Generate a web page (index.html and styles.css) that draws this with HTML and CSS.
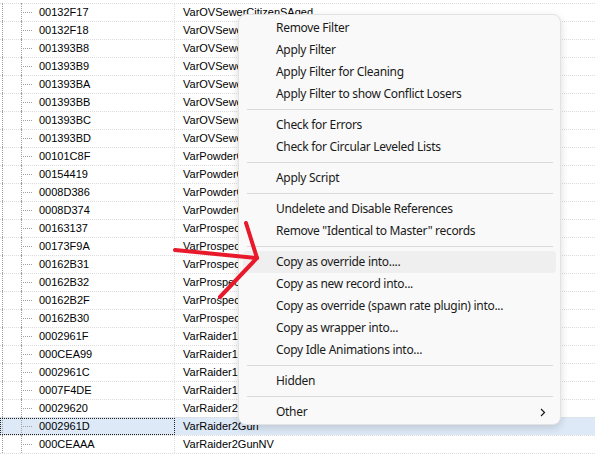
FILE: index.html
```html
<!DOCTYPE html>
<html>
<head>
<meta charset="utf-8">
<link rel="stylesheet" href="styles.css">
</head>
<body>
<div class="tree">
  <div class="row"><div class="c1"><span class="root"></span><span class="branch"></span><span class="id">00132F17</span></div><div class="c2">VarOVSewerCitizenSAged</div></div>
  <div class="row"><div class="c1"><span class="root"></span><span class="branch"></span><span class="id">00132F18</span></div><div class="c2">VarOVSewerCitizenSBase</div></div>
  <div class="row"><div class="c1"><span class="root"></span><span class="branch"></span><span class="id">001393B8</span></div><div class="c2">VarOVSewerCitizenF01</div></div>
  <div class="row"><div class="c1"><span class="root"></span><span class="branch"></span><span class="id">001393B9</span></div><div class="c2">VarOVSewerCitizenF02</div></div>
  <div class="row"><div class="c1"><span class="root"></span><span class="branch"></span><span class="id">001393BA</span></div><div class="c2">VarOVSewerCitizenM01</div></div>
  <div class="row"><div class="c1"><span class="root"></span><span class="branch"></span><span class="id">001393BB</span></div><div class="c2">VarOVSewerCitizenM02</div></div>
  <div class="row"><div class="c1"><span class="root"></span><span class="branch"></span><span class="id">001393BC</span></div><div class="c2">VarOVSewerCitizenM03</div></div>
  <div class="row"><div class="c1"><span class="root"></span><span class="branch"></span><span class="id">001393BD</span></div><div class="c2">VarOVSewerCitizenM04</div></div>
  <div class="row"><div class="c1"><span class="root"></span><span class="branch"></span><span class="id">00101C8F</span></div><div class="c2">VarPowderGanger01</div></div>
  <div class="row"><div class="c1"><span class="root"></span><span class="branch"></span><span class="id">00154419</span></div><div class="c2">VarPowderGanger02</div></div>
  <div class="row"><div class="c1"><span class="root"></span><span class="branch"></span><span class="id">0008D386</span></div><div class="c2">VarPowderGangerF</div></div>
  <div class="row"><div class="c1"><span class="root"></span><span class="branch"></span><span class="id">0008D374</span></div><div class="c2">VarPowderGangerM</div></div>
  <div class="row"><div class="c1"><span class="root"></span><span class="branch"></span><span class="id">00163137</span></div><div class="c2">VarProspector01</div></div>
  <div class="row"><div class="c1"><span class="root"></span><span class="branch"></span><span class="id">00173F9A</span></div><div class="c2">VarProspector02</div></div>
  <div class="row"><div class="c1"><span class="root"></span><span class="branch"></span><span class="id">00162B31</span></div><div class="c2">VarProspectorF</div></div>
  <div class="row"><div class="c1"><span class="root"></span><span class="branch"></span><span class="id">00162B32</span></div><div class="c2">VarProspectorM</div></div>
  <div class="row"><div class="c1"><span class="root"></span><span class="branch"></span><span class="id">00162B2F</span></div><div class="c2">VarProspectorFAged</div></div>
  <div class="row"><div class="c1"><span class="root"></span><span class="branch"></span><span class="id">00162B30</span></div><div class="c2">VarProspectorMAged</div></div>
  <div class="row"><div class="c1"><span class="root"></span><span class="branch"></span><span class="id">0002961F</span></div><div class="c2">VarRaider1Gun</div></div>
  <div class="row"><div class="c1"><span class="root"></span><span class="branch"></span><span class="id">000CEA99</span></div><div class="c2">VarRaider1GunNV</div></div>
  <div class="row"><div class="c1"><span class="root"></span><span class="branch"></span><span class="id">0002961C</span></div><div class="c2">VarRaider1Melee</div></div>
  <div class="row"><div class="c1"><span class="root"></span><span class="branch"></span><span class="id">0007F4DE</span></div><div class="c2">VarRaider1MeleeNV</div></div>
  <div class="row"><div class="c1"><span class="root"></span><span class="branch"></span><span class="id">00029620</span></div><div class="c2">VarRaider2Melee</div></div>
  <div class="row selected"><div class="c1"><span class="root"></span><span class="branch"></span><span class="id">0002961D</span></div><div class="c2">VarRaider2Gun</div></div>
  <div class="row last"><div class="c1"><span class="root"></span><span class="branch"></span><span class="id">000CEAAA</span></div><div class="c2">VarRaider2GunNV</div></div>
</div>

<div class="menu">
  <div class="item">Remove Filter</div>
  <div class="item">Apply Filter</div>
  <div class="item">Apply Filter for Cleaning</div>
  <div class="item">Apply Filter to show Conflict Losers</div>
  <div class="sep"></div>
  <div class="item">Check for Errors</div>
  <div class="item">Check for Circular Leveled Lists</div>
  <div class="sep"></div>
  <div class="item">Apply Script</div>
  <div class="sep"></div>
  <div class="item">Undelete and Disable References</div>
  <div class="item">Remove "Identical to Master" records</div>
  <div class="sep"></div>
  <div class="item hover">Copy as override into....</div>
  <div class="item">Copy as new record into...</div>
  <div class="item">Copy as override (spawn rate plugin) into...</div>
  <div class="item">Copy as wrapper into...</div>
  <div class="item">Copy Idle Animations into...</div>
  <div class="sep"></div>
  <div class="item">Hidden</div>
  <div class="sep"></div>
  <div class="item sub">Other<svg class="chev" width="6" height="9" viewBox="0 0 6 9"><path d="M1 1 L4.5 4.5 L1 8" fill="none" stroke="#1a1a1a" stroke-width="1.2"/></svg></div>
</div>

<svg class="arrow" width="595" height="457" viewBox="0 0 595 457">
  <path d="M175 250 L257 258" fill="none" stroke="#e8192b" stroke-width="4" stroke-linecap="round"/>
  <path d="M246 223 L257 258 L220 297" fill="none" stroke="#e8192b" stroke-width="4" stroke-linecap="round" stroke-linejoin="miter"/>
</svg>
</body>
</html>
```

FILE: styles.css
```css
html, body {
  margin: 0;
  padding: 0;
  background: #ffffff;
  width: 595px;
  height: 457px;
  overflow: hidden;
}

body {
  position: relative;
}

.tree {
  padding-top: 3px;
  font-family: "Liberation Sans", Arial, sans-serif;
  font-size: 11px;
  color: #000;
}

.row {
  display: flex;
  height: 18px;
  box-sizing: border-box;
  border-top: 1px dotted #dcdcdc;
}

.row.last {
  height: 19px;
  border-bottom: 1px dotted #dcdcdc;
}

.c1 {
  width: 175px;
  flex: none;
  display: flex;
  align-items: stretch;
  box-sizing: border-box;
  padding-left: 2px;
  border-right: 1px dotted #dcdcdc;
}

.root {
  width: 18px;
  flex: none;
  border-left: 1px dotted #a0a0a0;
  margin-top: -1px;
}

.branch {
  position: relative;
  width: 17px;
  flex: none;
  border-left: 1px dotted #a0a0a0;
  margin-top: -1px;
}

.branch::after {
  content: "";
  position: absolute;
  left: 1px;
  top: 9px;
  width: 9px;
  border-top: 1px dotted #a0a0a0;
}

.id, .c2 {
  line-height: 17px;
  white-space: nowrap;
}

.c2 {
  padding-left: 8px;
  flex: 1;
}

.row.selected {
  background: #dde9f7;
}

.row.selected .c1 {
  outline: 1px dotted #222;
  outline-offset: -1px;
}

.menu {
  position: absolute;
  left: 238px;
  top: 14px;
  width: 323px;
  box-sizing: border-box;
  padding: 2px 0 1px;
  background: #f9f9f9;
  border: 1px solid #e2e2e2;
  border-radius: 8px;
  box-shadow: 0 3px 8px rgba(0, 0, 0, 0.14);
  font-family: "Noto Sans", "Open Sans", sans-serif;
  font-size: 12px;
  letter-spacing: -0.3px;
  color: #1a1a1a;
}

.item {
  position: relative;
  height: 22px;
  line-height: 22px;
  margin: 0 4px;
  padding-left: 33px;
  border-radius: 4px;
  white-space: nowrap;
}

.item.hover {
  background: #efefef;
}

.chev {
  position: absolute;
  right: 10px;
  top: 7px;
}

.sep {
  height: 1px;
  margin: 4px 7px 4px 8px;
  background: #dadada;
}

.arrow {
  position: absolute;
  left: 0;
  top: 0;
  pointer-events: none;
}
```
